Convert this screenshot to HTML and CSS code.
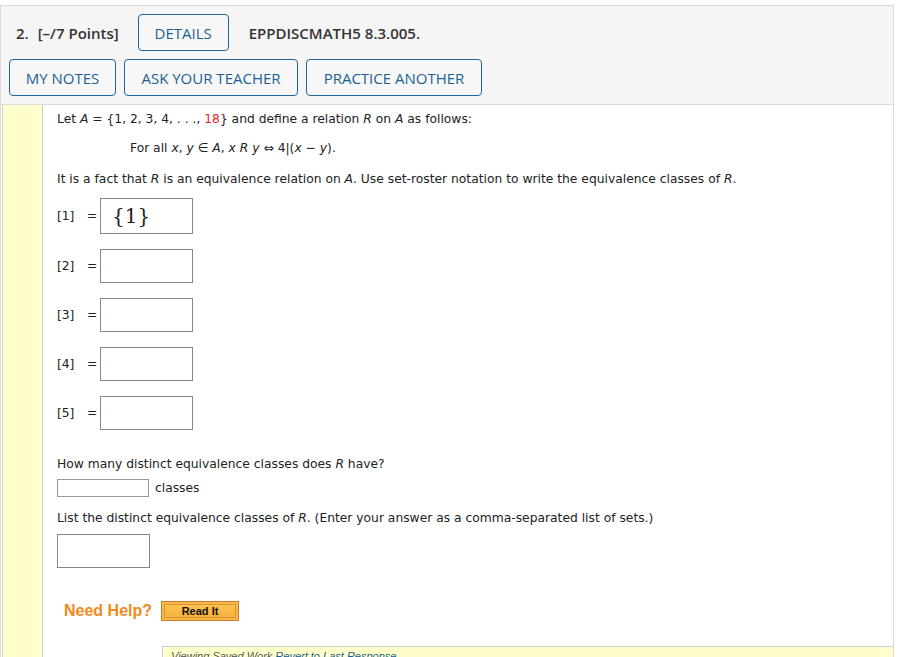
FILE: index.html
```html
<!DOCTYPE html>
<html>
<head>
<meta charset="utf-8">
<link rel="stylesheet" href="styles.css">
</head>
<body>
<div class="question">
  <div class="header">
    <div class="row row1">
      <span class="qnum">2.</span>
      <span class="points">[–/7 Points]</span>
      <span class="btn btn-details">DETAILS</span>
      <span class="code">EPPDISCMATH5 8.3.005.</span>
    </div>
    <div class="row row2">
      <span class="btn btn-notes">MY NOTES</span>
      <span class="btn btn-ask">ASK YOUR TEACHER</span>
      <span class="btn btn-practice">PRACTICE ANOTHER</span>
    </div>
  </div>
  <div class="body">
    <div class="side"></div>
    <div class="content">
      <p class="line l1">Let <i>A</i> = {1, 2, 3, 4, . . ., <span class="red">18</span>} and define a relation <i>R</i> on <i>A</i> as follows:</p>
      <p class="line l2">For all <i>x</i>, <i>y</i> ∈ <i>A</i>, <i>x</i> <i>R</i> <i>y</i> ⇔ 4|(<i>x</i> − <i>y</i>).</p>
      <p class="line l3">It is a fact that <i>R</i> is an equivalence relation on <i>A</i>. Use set-roster notation to write the equivalence classes of <i>R</i>.</p>
      <div class="eq first"><span class="lab">[1]</span><span class="eqs">=</span><span class="box box1"><span class="math">{1}</span></span></div>
      <div class="eq"><span class="lab">[2]</span><span class="eqs">=</span><span class="box"></span></div>
      <div class="eq"><span class="lab">[3]</span><span class="eqs">=</span><span class="box"></span></div>
      <div class="eq"><span class="lab">[4]</span><span class="eqs">=</span><span class="box"></span></div>
      <div class="eq"><span class="lab">[5]</span><span class="eqs">=</span><span class="box"></span></div>
      <p class="line l4">How many distinct equivalence classes does <i>R</i> have?</p>
      <div class="count"><span class="small-box"></span><span>classes</span></div>
      <p class="line l5">List the distinct equivalence classes of <i>R</i>. (Enter your answer as a comma-separated list of sets.)</p>
      <div class="list-box"></div>
      <div class="help"><span class="need">Need Help?</span><span class="readit"><span>Read It</span></span></div>
      <div class="saved"><span class="viewing">Viewing Saved Work</span> <span class="revert">Revert to Last Response</span></div>
    </div>
  </div>
</div>
</body>
</html>
```

FILE: styles.css
```css
html, body {
  margin: 0;
  padding: 0;
  background: #fff;
}
body {
  overflow: hidden;
  height: 657px;
}
.question {
  margin-top: 5px;
  width: 892px;
  border: 1px solid #dcdcdc;
  border-bottom: none;
}
.header {
  background: #f5f5f5;
  border-bottom: 1px solid #dcdcdc;
  padding: 8px 0 8px 8px;
  font-family: "Open Sans", sans-serif;
}
.row {
  display: flex;
  align-items: center;
  height: 37px;
}
.row2 {
  margin-top: 8px;
  gap: 8px;
}
.qnum {
  margin-left: 7px;
  font-weight: 600;
  font-size: 15px;
  color: #333;
}
.points {
  margin-left: 9px;
  font-weight: 600;
  font-size: 15px;
  color: #333;
}
.btn {
  box-sizing: border-box;
  height: 37px;
  border: 1px solid #1f6699;
  border-radius: 4px;
  display: flex;
  align-items: center;
  justify-content: center;
  font-size: 15px;
  font-weight: 500;
  color: #1c5f92;
  background: #f7f7f7;
}
.btn-details { width: 91px; margin-left: 19px; }
.btn-notes { width: 107px; }
.btn-ask { width: 174px; }
.btn-practice { width: 176px; }
.code {
  margin-left: 20px;
  font-weight: 600;
  font-size: 15px;
  color: #333;
}
.body {
  display: flex;
  height: 560px;
}
.side {
  width: 39px;
  margin-left: 1px;
  background: #ffffcc;
  border-left: 1px solid #cfcfcf;
  border-right: 1px solid #cfcfcf;
}
.content {
  flex: 1;
  padding-left: 14px;
  font-family: "DejaVu Sans", Verdana, sans-serif;
  font-size: 12.3px;
  color: #222;
}
.line {
  margin: 0;
  line-height: 16px;
  white-space: nowrap;
}
.line i {
  font-style: italic;
}
.red { color: #e8231f; }
.l1 { margin-top: 6px; }
.l2 { margin-top: 13px; padding-left: 73px; }
.l3 { margin-top: 15px; }
.eq {
  display: flex;
  align-items: center;
  margin-top: 15px;
}
.eq.first { margin-top: 11px; }
.eq .box { height: 32px; }
.eq.first .box { height: 34px; }
.lab { width: 30px; }
.eqs { width: 13px; }
.box {
  display: inline-flex;
  align-items: center;
  width: 91px;
  border: 1px solid #888;
  box-sizing: content-box;
}
.math {
  font-family: "DejaVu Serif", serif;
  font-size: 20px;
  color: #222;
  margin-left: 11px;
}
.l4 { margin-top: 26px; }
.count {
  display: flex;
  align-items: center;
  margin-top: 7px;
  gap: 6px;
}
.small-box {
  width: 90px;
  height: 16px;
  border: 1px solid #999;
}
.l5 { margin-top: 13px; }
.list-box {
  margin-top: 8px;
  width: 91px;
  height: 32px;
  border: 1px solid #888;
}
.help {
  display: flex;
  align-items: center;
  margin-top: 33px;
  margin-left: 7px;
}
.need {
  font-family: "Liberation Sans", Arial, sans-serif;
  font-weight: bold;
  font-size: 16px;
  color: #ef8a1d;
}
.readit {
  margin-left: 9px;
  box-sizing: border-box;
  width: 78px;
  height: 20px;
  border: 1px solid #c77a2a;
  background: #f8b848;
  padding: 2px;
  display: flex;
}
.readit span {
  flex: 1;
  border: 1px solid #d99638;
  background: linear-gradient(#ffc24e, #f7b13d);
  font-family: "Liberation Sans", Arial, sans-serif;
  font-weight: bold;
  font-size: 11px;
  color: #111;
  display: flex;
  align-items: center;
  justify-content: center;
}
.saved {
  margin-top: 25px;
  margin-left: 105px;
  background: #ffffcc;
  border-top: 1px solid #cfcfcf;
  border-left: 1px solid #cfcfcf;
  height: 30px;
  padding: 3px 0 0 8px;
  font-family: "Liberation Sans", Arial, sans-serif;
  font-style: italic;
  font-size: 11px;
  color: #555;
}
.revert { color: #1c5f92; }
```
